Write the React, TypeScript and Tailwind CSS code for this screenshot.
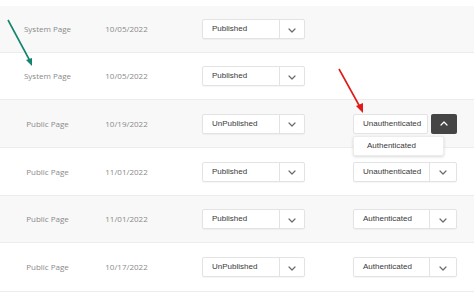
import React from "react";

type Row = {
  label: string;
  date: string;
  status: string;
  auth?: string;
  open?: boolean;
  h: number;
  grey: boolean;
};

const rows: Row[] = [
  { label: "System Page", date: "10/05/2022", status: "Published", h: 47, grey: true },
  { label: "System Page", date: "10/05/2022", status: "Published", h: 47, grey: false },
  { label: "Public Page", date: "10/19/2022", status: "UnPublished", auth: "Unauthenticated", open: true, h: 48, grey: true },
  { label: "Public Page", date: "11/01/2022", status: "Published", auth: "Unauthenticated", h: 48, grey: false },
  { label: "Public Page", date: "11/01/2022", status: "Published", auth: "Authenticated", h: 47, grey: true },
  { label: "Public Page", date: "10/17/2022", status: "UnPublished", auth: "Authenticated", h: 49, grey: false },
];

const Chevron = ({ up = false, color = "#6a6a6a" }: { up?: boolean; color?: string }) => (
  <svg width="8" height="5" viewBox="0 0 8 5" className={up ? "rotate-180" : "mt-[2px]"}>
    <path d="M1 1 L4 4 L7 1" fill="none" stroke={color} strokeWidth="1.2" strokeLinecap="round" strokeLinejoin="round" />
  </svg>
);

const Select = ({ text, textW, btnW }: { text: string; textW: number; btnW: number }) => (
  <div className="flex h-[20px] rounded-[2px] border border-[#e3e3e3] bg-white shadow-[0_1px_1px_rgba(0,0,0,0.04)]">
    <div className="flex items-center pl-[9px] text-[8px] text-[#3a3a3a]" style={{ width: textW }}>
      {text}
    </div>
    <div className="flex items-center justify-center border-l border-[#e3e3e3]" style={{ width: btnW }}>
      <Chevron />
    </div>
  </div>
);

const labelFont = { fontFamily: "'Open Sans', 'Noto Sans', sans-serif" };

export default function App() {
  return (
    <div
      className="relative h-[295px] w-[474px] overflow-hidden bg-white pt-[6px]"
      style={{ fontFamily: "'Liberation Sans', Arial, sans-serif" }}
    >
      {rows.map((r, i) => (
        <div
          key={i}
          className={`relative flex items-center border-b border-[#ececec] ${r.grey ? "bg-[#f8f8f8]" : "bg-white"}`}
          style={{ height: r.h }}
        >
          <div className="w-[95px] text-center text-[8px] text-[#8a8a8a]" style={labelFont}>
            {r.label}
          </div>
          <div className="w-[63px] text-center text-[8px] text-[#8a8a8a]" style={labelFont}>
            {r.date}
          </div>
          <div className="ml-[44px]">
            <Select text={r.status} textW={76} btnW={25} />
          </div>
          {r.auth && (
            <div className="relative ml-[48px]">
              {r.open ? (
                <>
                  <div className="flex h-[20px] items-center gap-[3px]">
                    <div className="flex h-[20px] w-[75px] items-center rounded-[2px] border border-[#e3e3e3] bg-white pl-[9px] text-[8px] text-[#3a3a3a]">
                      {r.auth}
                    </div>
                    <div className="flex h-[20px] w-[26px] items-center justify-center rounded-[2px] bg-[#454545]">
                      <Chevron up color="#fff" />
                    </div>
                  </div>
                  <div className="absolute left-0 top-[22px] z-10 flex h-[20px] w-[91px] items-center rounded-[2px] border border-[#ececec] bg-white pl-[13px] text-[8px] text-[#3a3a3a] shadow-[0_1px_3px_rgba(0,0,0,0.15)]">
                    Authenticated
                  </div>
                </>
              ) : (
                <Select text={r.auth} textW={75} btnW={27} />
              )}
            </div>
          )}
        </div>
      ))}

      {/* annotation arrows */}
      <svg className="pointer-events-none absolute left-0 top-0" width="474" height="295">
        <line x1="8" y1="20" x2="30" y2="61" stroke="#14846f" strokeWidth="1.6" />
        <polygon points="32,66 26,60 32,58" fill="#14846f" />
        <line x1="339" y1="69" x2="360" y2="107" stroke="#e01a1a" strokeWidth="1.6" />
        <polygon points="363,113 356,106 363,103" fill="#e01a1a" />
      </svg>
    </div>
  );
}
